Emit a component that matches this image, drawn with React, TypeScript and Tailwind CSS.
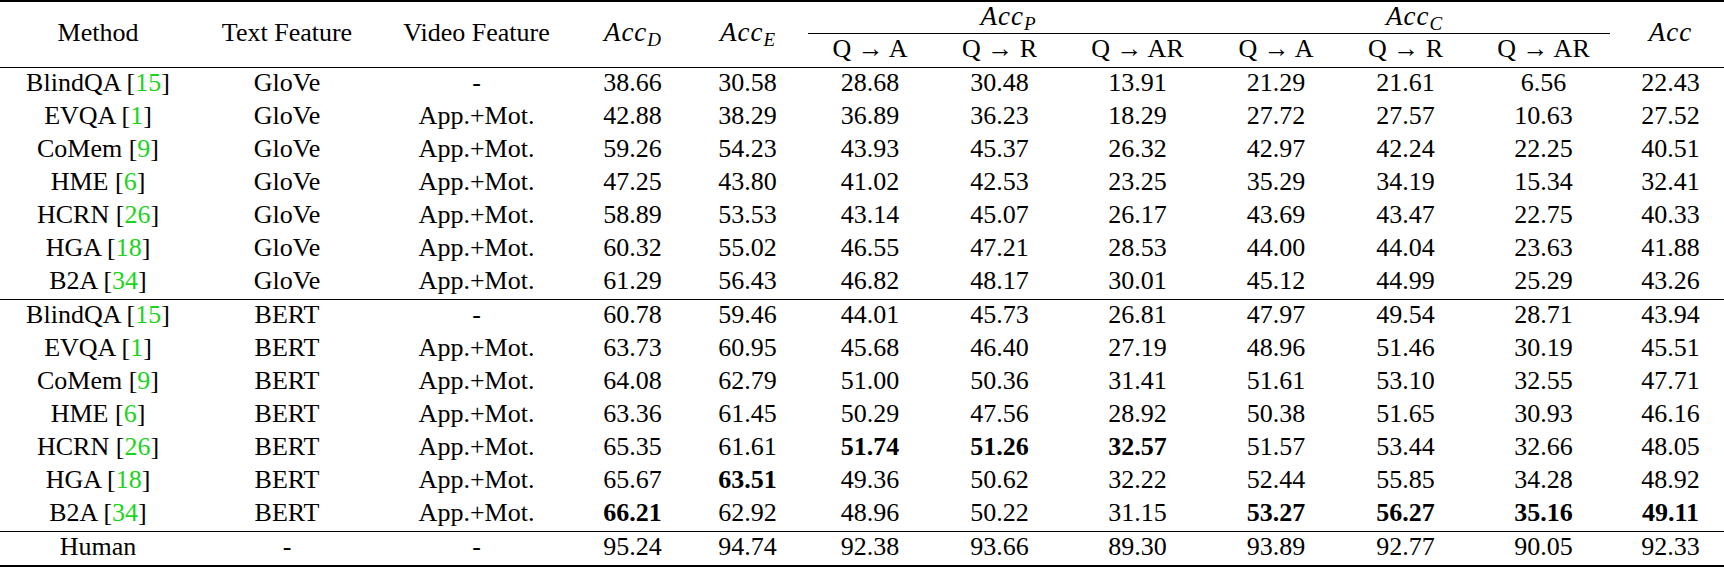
type Row = { name: string; cite?: string; text: string; video: string; vals: string[] };

const glove: Row[] = [
  { name: "BlindQA", cite: "15", text: "GloVe", video: "-", vals: ["38.66", "30.58", "28.68", "30.48", "13.91", "21.29", "21.61", "6.56", "22.43"] },
  { name: "EVQA", cite: "1", text: "GloVe", video: "App.+Mot.", vals: ["42.88", "38.29", "36.89", "36.23", "18.29", "27.72", "27.57", "10.63", "27.52"] },
  { name: "CoMem", cite: "9", text: "GloVe", video: "App.+Mot.", vals: ["59.26", "54.23", "43.93", "45.37", "26.32", "42.97", "42.24", "22.25", "40.51"] },
  { name: "HME", cite: "6", text: "GloVe", video: "App.+Mot.", vals: ["47.25", "43.80", "41.02", "42.53", "23.25", "35.29", "34.19", "15.34", "32.41"] },
  { name: "HCRN", cite: "26", text: "GloVe", video: "App.+Mot.", vals: ["58.89", "53.53", "43.14", "45.07", "26.17", "43.69", "43.47", "22.75", "40.33"] },
  { name: "HGA", cite: "18", text: "GloVe", video: "App.+Mot.", vals: ["60.32", "55.02", "46.55", "47.21", "28.53", "44.00", "44.04", "23.63", "41.88"] },
  { name: "B2A", cite: "34", text: "GloVe", video: "App.+Mot.", vals: ["61.29", "56.43", "46.82", "48.17", "30.01", "45.12", "44.99", "25.29", "43.26"] },
];

// "*" marks the best result in a column
const bert: Row[] = [
  { name: "BlindQA", cite: "15", text: "BERT", video: "-", vals: ["60.78", "59.46", "44.01", "45.73", "26.81", "47.97", "49.54", "28.71", "43.94"] },
  { name: "EVQA", cite: "1", text: "BERT", video: "App.+Mot.", vals: ["63.73", "60.95", "45.68", "46.40", "27.19", "48.96", "51.46", "30.19", "45.51"] },
  { name: "CoMem", cite: "9", text: "BERT", video: "App.+Mot.", vals: ["64.08", "62.79", "51.00", "50.36", "31.41", "51.61", "53.10", "32.55", "47.71"] },
  { name: "HME", cite: "6", text: "BERT", video: "App.+Mot.", vals: ["63.36", "61.45", "50.29", "47.56", "28.92", "50.38", "51.65", "30.93", "46.16"] },
  { name: "HCRN", cite: "26", text: "BERT", video: "App.+Mot.", vals: ["65.35", "61.61", "*51.74", "*51.26", "*32.57", "51.57", "53.44", "32.66", "48.05"] },
  { name: "HGA", cite: "18", text: "BERT", video: "App.+Mot.", vals: ["65.67", "*63.51", "49.36", "50.62", "32.22", "52.44", "55.85", "34.28", "48.92"] },
  { name: "B2A", cite: "34", text: "BERT", video: "App.+Mot.", vals: ["*66.21", "62.92", "48.96", "50.22", "31.15", "*53.27", "*56.27", "*35.16", "*49.11"] },
];

const human: Row = { name: "Human", text: "-", video: "-", vals: ["95.24", "94.74", "92.38", "93.66", "89.30", "93.89", "92.77", "90.05", "92.33"] };

const cell = "p-0 pb-[4px] h-[33px] leading-[29px] text-center align-middle whitespace-nowrap";
const head = cell + " font-normal";

function Acc({ sub }: { sub?: string }) {
  return (
    <span className="italic text-[27px] tracking-[1px]">
      Acc
      {sub && <sub className="text-[19px] italic tracking-normal">{sub}</sub>}
    </span>
  );
}

function DataRow({ row, first }: { row: Row; first?: boolean }) {
  return (
    <tr className={first ? "border-t border-black" : ""}>
      <td className={cell}>
        {row.name}
        {row.cite && (
          <>
            {" ["}
            <span className="text-[#19d419]">{row.cite}</span>
            {"]"}
          </>
        )}
      </td>
      <td className={cell}>{row.text}</td>
      <td className={cell}>{row.video}</td>
      {row.vals.map((v, i) =>
        v.startsWith("*") ? (
          <td key={i} className={cell + " font-bold"}>{v.slice(1)}</td>
        ) : (
          <td key={i} className={cell}>{v}</td>
        )
      )}
    </tr>
  );
}

export default function App() {
  const arrows = ["Q → A", "Q → R", "Q → AR", "Q → A", "Q → R", "Q → AR"];
  return (
    <div className="w-[1724px] h-[571px] bg-white text-black font-[family-name:Liberation_Serif,serif] text-[26px] overflow-hidden">
      <table className="w-[1724px] table-fixed border-collapse">
        <colgroup>
          <col className="w-[196px]" />
          <col className="w-[182px]" />
          <col className="w-[197px]" />
          <col className="w-[115px]" />
          <col className="w-[115px]" />
          <col className="w-[130px]" />
          <col className="w-[129px]" />
          <col className="w-[147px]" />
          <col className="w-[130px]" />
          <col className="w-[129px]" />
          <col className="w-[147px]" />
          <col className="w-[107px]" />
        </colgroup>
        <thead>
          <tr className="border-t-2 border-black">
            <th rowSpan={2} className={head}>Method</th>
            <th rowSpan={2} className={head}>Text Feature</th>
            <th rowSpan={2} className={head}>Video Feature</th>
            <th rowSpan={2} className={head}><Acc sub="D" /></th>
            <th rowSpan={2} className={head}><Acc sub="E" /></th>
            <th colSpan={3} className="p-0 font-normal align-top">
              <div className="h-[31px] leading-[28px] text-center"><Acc sub="P" /></div>
              <div className="h-px bg-black ml-[3px]" />
            </th>
            <th colSpan={3} className="p-0 font-normal align-top">
              <div className="h-[31px] leading-[28px] text-center"><Acc sub="C" /></div>
              <div className="h-px bg-black mr-[7px]" />
            </th>
            <th rowSpan={2} className={head}><Acc /></th>
          </tr>
          <tr className="border-b border-black">
            {arrows.map((a, i) => (
              <th key={i} className="p-0 pb-[3px] h-[33px] leading-[30px] text-center font-normal whitespace-nowrap">
                {a}
              </th>
            ))}
          </tr>
        </thead>
        <tbody>
          {glove.map((r, i) => (
            <DataRow key={"g" + i} row={r} />
          ))}
          {bert.map((r, i) => (
            <DataRow key={"b" + i} row={r} first={i === 0} />
          ))}
          <DataRow row={human} first />
        </tbody>
        <tfoot>
          <tr className="border-t-2 border-black">
            <td colSpan={12} className="p-0 h-0" />
          </tr>
        </tfoot>
      </table>
    </div>
  );
}
